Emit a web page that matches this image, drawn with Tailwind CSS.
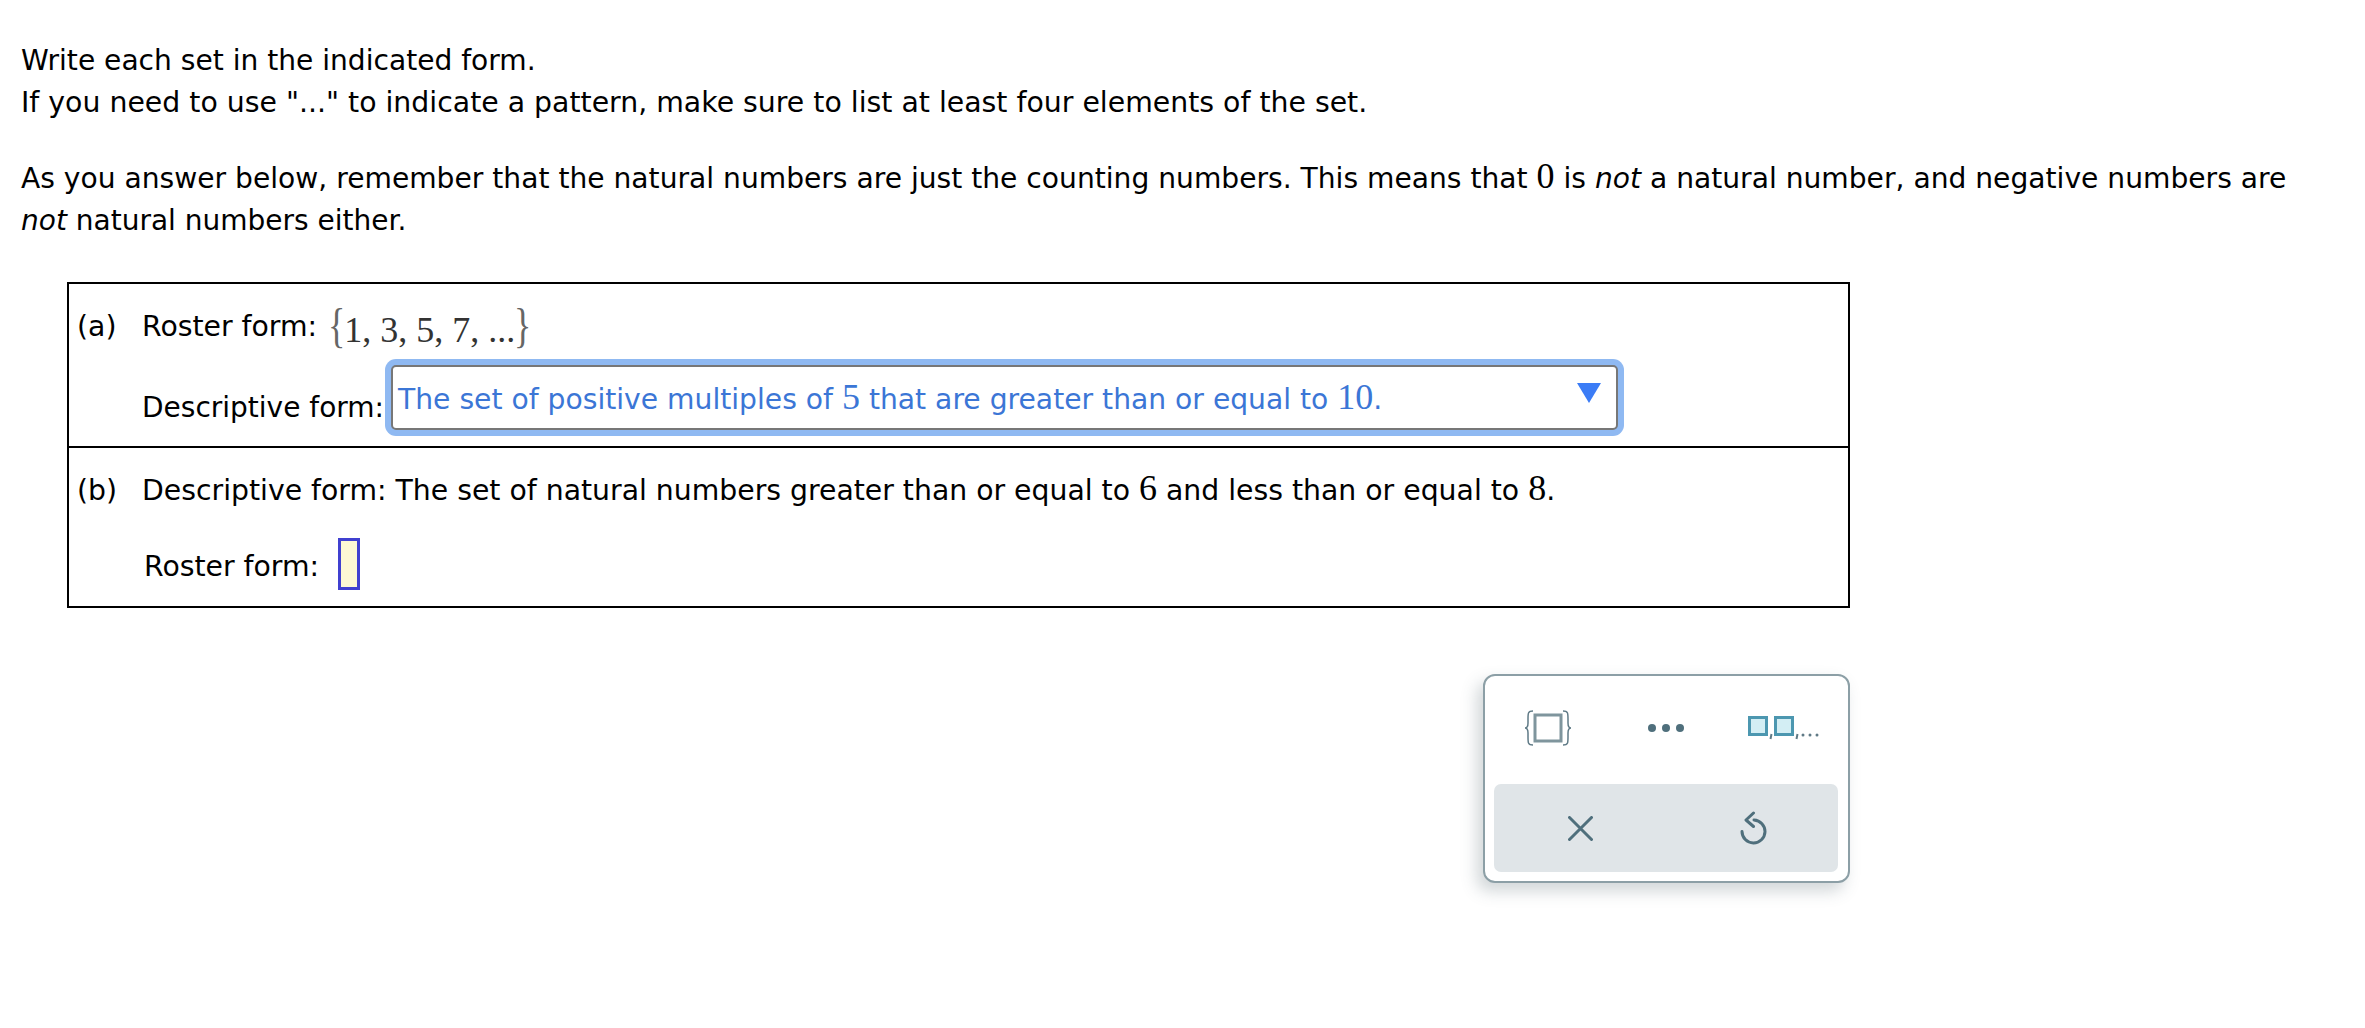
<!DOCTYPE html>
<html><head><meta charset="utf-8"><script src="https://cdn.jsdelivr.net/npm/@tailwindcss/browser@4"></script></head>
<body class="bg-white">
<div class="w-[2365px] h-[1028px] overflow-hidden font-['DejaVu_Sans',sans-serif] text-[28.3px] leading-[42px] text-black">
<div class="pl-[21px] pt-[40px]">
<p class="text-[28.1px]">Write each set in the indicated form.</p>
<p class="text-[28.35px]">If you need to use "..." to indicate a pattern, make sure to list at least four elements of the set.</p>
<p class="mt-[34px] text-[28.15px]">As you answer below, remember that the natural numbers are just the counting numbers. This means that <span class="font-['Liberation_Serif',serif] text-[36px] leading-[0]">0</span> is <em>not</em> a natural number, and negative numbers are<br><span class="text-[28px]"><em>not</em> natural numbers either.</span></p>
</div>
<div class="ml-[67px] mt-[40px] w-[1783px] h-[326px] border-2 border-black">
<div class="h-[164px] border-b-2 border-black pl-[8px] pt-[20px]">
<div class="flex items-center h-[46px]"><span class="w-[65px]">(a)</span><span>Roster form:</span><span class="ml-[12px] font-['Liberation_Serif',serif] text-[36px] text-[#333]"><span class="inline-block text-[48px] leading-[46px] scale-x-75 -mx-[4px] font-light text-[#666]">{</span>1, 3, 5, 7, ...<span class="inline-block text-[48px] leading-[46px] scale-x-75 -mx-[4px] font-light text-[#666]">}</span></span></div>
<div class="flex items-start mt-[15px] pl-[65px]"><span class="w-[249px] shrink-0 pt-[22px] text-[28px]">Descriptive form:</span>
<div class="w-[1227px] h-[65px] rounded-[5px] border-2 border-[#777] ring-[6px] ring-[#8fb9f2] bg-white flex justify-between pl-[5px] pr-[15px] text-[#3b76d6] leading-[66px]">
<span class="text-[28.2px]">The set of positive multiples of <span class="font-['Liberation_Serif',serif] text-[36px] leading-[0]">5</span> that are greater than or equal to <span class="font-['Liberation_Serif',serif] text-[36px] leading-[0]">10</span>.</span>
<svg class="mt-[16px]" width="24" height="20" viewBox="0 0 24 20"><path d="M0 0H24L12 20Z" fill="#3b7cf6"/></svg>
</div></div>
</div>
<div class="pl-[8px] pt-[22px]">
<div class="flex"><span class="w-[65px]">(b)</span><span>Descriptive form: The set of natural numbers greater than or equal to <span class="font-['Liberation_Serif',serif] text-[36px] leading-[0]">6</span> and less than or equal to <span class="font-['Liberation_Serif',serif] text-[36px] leading-[0]">8</span>.</span></div>
<div class="flex items-start mt-[26px] pl-[67px]"><span class="w-[194px] pt-[8px]">Roster form:</span><span class="w-[22px] h-[52px] border-[3px] border-[#4040d0] bg-[#fdf8d4]"></span></div>
</div>
</div>
<div class="ml-[1483px] mt-[66px] w-[367px] h-[209px] rounded-[12px] border-2 border-[#8c9fa6] bg-white shadow-[-6px_8px_16px_rgba(70,90,100,0.25)] pl-[9px] pt-[10px]">
<div class="h-[84px] mb-[14px] flex items-center pl-[30px]">
<svg width="48" height="36" viewBox="0 0 48 36" fill="none"><rect x="11" y="5" width="26" height="26" stroke="#7f959d" stroke-width="3"/><path d="M9 1C4 1 4 3 4 9V13C4 16 3 18 1 18C3 18 4 20 4 23V27C4 33 4 35 9 35M39 1C44 1 44 3 44 9V13C44 16 45 18 47 18C45 18 44 20 44 23V27C44 33 44 35 39 35" stroke="#5f7a86" stroke-width="1.5"/></svg>
<svg class="ml-[76px]" width="36" height="8" viewBox="0 0 36 8"><circle cx="4" cy="4" r="4" fill="#4f6f7c"/><circle cx="18" cy="4" r="4" fill="#4f6f7c"/><circle cx="32" cy="4" r="4" fill="#4f6f7c"/></svg>
<svg class="ml-[64px]" width="71" height="24" viewBox="0 0 71 24"><rect x="1.5" y="1.5" width="17" height="17" fill="#d3eef4" stroke="#4c97b0" stroke-width="3"/><rect x="27.5" y="1.5" width="17" height="17" fill="#d3eef4" stroke="#4c97b0" stroke-width="3"/><path d="M23.5 18L22.5 23M49.5 18L48.5 23" stroke="#5f7a86" stroke-width="2"/><circle cx="55" cy="19" r="1.5" fill="#5f7a86"/><circle cx="62" cy="19" r="1.5" fill="#5f7a86"/><circle cx="69" cy="19" r="1.5" fill="#5f7a86"/></svg>
</div>
<div class="w-[344px] h-[88px] rounded-[7px] bg-[#e0e5e8] flex items-center pl-[74px]">
<svg width="25" height="25" viewBox="0 0 25 25" fill="none"><path d="M1.5 1.5L23.5 23.5M23.5 1.5L1.5 23.5" stroke="#4f6f7c" stroke-width="3" stroke-linecap="round"/></svg>
<svg class="ml-[147px]" width="27" height="34" viewBox="0 0 27 34" fill="none"><path d="M14 9A11.5 11.5 0 1 1 2 20.5M13.5 2L6 9L13.5 15.5" stroke="#4f6f7c" stroke-width="3" stroke-linecap="round" stroke-linejoin="round"/></svg>
</div>
</div>
</div>
</body></html>
